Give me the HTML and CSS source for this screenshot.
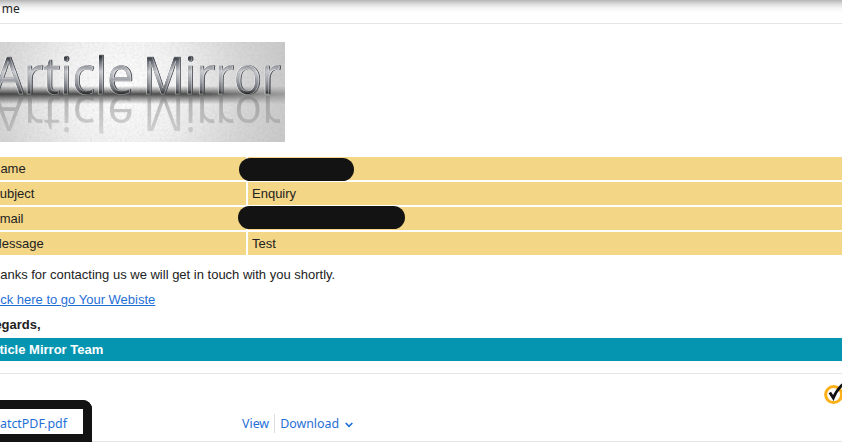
FILE: index.html
```
<!DOCTYPE html>
<html lang="en">
<head>
<meta charset="UTF-8">
<meta name="viewport" content="width=device-width, initial-scale=1.0">
<title>Article Mirror</title>
<link rel="stylesheet" href="styles.css">
</head>
<body>
    <div class="mail">
        <div class="mail-header">to me</div>

        <div class="mail-body">
            <svg class="logo" width="300" height="100" viewBox="-15 0 300 100">
                <defs>
                    <radialGradient id="light" gradientUnits="userSpaceOnUse" cx="122" cy="46" r="165">
                        <stop offset="0" stop-color="#ffffff"/>
                        <stop offset="0.35" stop-color="#f2f2f2"/>
                        <stop offset="0.75" stop-color="#d6d6d6"/>
                        <stop offset="1" stop-color="#cacaca"/>
                    </radialGradient>
                    <linearGradient id="metal" gradientUnits="userSpaceOnUse" x1="0" y1="14" x2="0" y2="53">
                        <stop offset="0" stop-color="#25282e"/>
                        <stop offset="0.15" stop-color="#6c7078"/>
                        <stop offset="0.4" stop-color="#c6c8cc"/>
                        <stop offset="0.65" stop-color="#9a9da3"/>
                        <stop offset="0.85" stop-color="#6a6d72"/>
                        <stop offset="1" stop-color="#181818"/>
                    </linearGradient>
                    <linearGradient id="floor" x1="0" y1="0" x2="0" y2="1">
                        <stop offset="0" stop-color="#222" stop-opacity="0"/>
                        <stop offset="0.45" stop-color="#222" stop-opacity="0.8"/>
                        <stop offset="1" stop-color="#222" stop-opacity="0"/>
                    </linearGradient>
                    <linearGradient id="fade" gradientUnits="userSpaceOnUse" x1="0" y1="12" x2="0" y2="52">
                        <stop offset="0" stop-color="#777" stop-opacity="0.25"/>
                        <stop offset="1" stop-color="#777" stop-opacity="0.5"/>
                    </linearGradient>
                    <linearGradient id="sides" x1="0" y1="0" x2="1" y2="0">
                        <stop offset="0" stop-color="#fff"/>
                        <stop offset="0.7" stop-color="#fff"/>
                        <stop offset="1" stop-color="#555"/>
                    </linearGradient>
                    <mask id="floorMask">
                        <rect x="-15" y="36" width="300" height="30" fill="url(#sides)"/>
                    </mask>
                    <filter id="grain" x="0" y="0" width="100%" height="100%">
                        <feTurbulence type="fractalNoise" baseFrequency="0.4" numOctaves="2" seed="4"/>
                        <feColorMatrix values="0 0 0 0 0.3  0 0 0 0 0.3  0 0 0 0 0.3  0.6 0 0 0 -0.22"/>
                    </filter>
                    <filter id="soft"><feGaussianBlur stdDeviation="0.7"/></filter>
                    <filter id="edge"><feGaussianBlur stdDeviation="0.3"/></filter>
                    <g id="words" class="logo-text">
                        <text x="-6" y="52" textLength="140" lengthAdjust="spacingAndGlyphs">Article</text>
                        <text x="143" y="52" textLength="138" lengthAdjust="spacingAndGlyphs">Mirror</text>
                    </g>
                </defs>
                <rect x="-15" width="300" height="100" fill="url(#light)"/>
                <rect x="-15" width="300" height="100" filter="url(#grain)" opacity="0.45"/>
                <rect x="-15" y="44" width="300" height="18" fill="url(#floor)" mask="url(#floorMask)"/>
                <g transform="matrix(1 0 0 -0.95 0 103)" filter="url(#soft)">
                    <use href="#words" fill="url(#fade)"/>
                </g>
                <g filter="url(#edge)">
                    <use href="#words" x="0.6" y="0.4" fill="#33363c"/>
                    <use href="#words" fill="url(#metal)" stroke="#55585e" stroke-width="0.7"/>
                    <use href="#words" x="-0.3" y="0" fill="url(#metal)"/>
                    <use href="#words" x="-1" y="-0.4" fill="none" stroke="#fff" stroke-width="0.5" opacity="0.6"/>
                </g>
            </svg>

            <table class="enquiry">
                <tr>
                    <td class="label">Name</td>
                    <td><span class="redacted name"></span></td>
                </tr>
                <tr>
                    <td class="label">Subject</td>
                    <td>Enquiry</td>
                </tr>
                <tr>
                    <td class="label">Email</td>
                    <td><span class="redacted email"></span></td>
                </tr>
                <tr>
                    <td class="label">Message</td>
                    <td>Test</td>
                </tr>
            </table>

            <p class="thanks">Thanks for contacting us we will get in touch with you shortly.</p>
            <p class="site"><a href="#">Click here to go Your Webiste</a></p>
            <p class="regards">Regards,</p>
            <div class="team">Article Mirror Team</div>
        </div>

        <div class="attachments">
            <div class="file"><a href="#">atctPDF.pdf</a></div>
            <div class="actions">
                <a href="#">View</a>
                <a href="#" class="download">Download
                    <svg width="8" height="6" viewBox="0 0 8 6"><path d="M0.7 1 L4 4.3 L7.3 1" fill="none" stroke="#1f6fd6" stroke-width="1.7"/></svg>
                </a>
            </div>
            <svg class="scan" width="18" height="24" viewBox="0 0 18 24">
                <circle cx="9.6" cy="12.6" r="8" fill="#fff" stroke="#fdb017" stroke-width="3"/>
                <path d="M5.8 10.5 L9.3 16 Q12 9 18.5 2.5" fill="none" stroke="#111" stroke-width="2.8"/>
            </svg>
        </div>
    </div>
</body>
</html>
```
FILE: styles.css
```
body {
    margin: 0;
    overflow: hidden;
    background-color: #fff;
    font-family: "Liberation Sans", Arial, sans-serif;
    font-size: 13px;
    color: #222;
}
a {
    color: #1f6fd6;
}
.mail {
    height: 442px;
    overflow: hidden;
    background: linear-gradient(#b5b5b5, #dcdcdc 4px, #f5f5f5 8px, #fff 13px) no-repeat;
    background-size: 100% 16px;
}
.mail-header {
    box-sizing: border-box;
    height: 24px;
    margin-left: -15px;
    padding-left: 2px;
    border-bottom: 1px solid #e5e5e5;
    font: 12px/18px "Noto Sans", sans-serif;
}
.mail-body {
    box-sizing: border-box;
    height: 350px;
    margin-left: -15px;
    padding-top: 18px;
    border-bottom: 1px solid #e5e5e5;
}
.logo {
    display: block;
}
.logo-text {
    font-family: "Open Sans", "Noto Sans", sans-serif;
    font-size: 51px;
}
.enquiry {
    width: 100%;
    margin-top: 15px;
    border-spacing: 0;
    table-layout: fixed;
}
.enquiry td {
    position: relative;
    box-sizing: border-box;
    height: 25px;
    padding: 0 4px;
    border-bottom: 2px solid #fff;
    background-color: #f3d686;
}
.enquiry .label {
    width: 263px;
    padding-left: 6px;
    border-right: 2px solid #fff;
}
.redacted {
    position: absolute;
    left: -9px;
    height: 23px;
    border-radius: 12px;
    background-color: #131313;
}
.redacted.name {
    top: 1px;
    width: 115px;
}
.redacted.email {
    top: -1px;
    left: -10px;
    width: 167px;
}
.mail-body p {
    margin: 0;
    line-height: 25px;
}
.mail-body .thanks {
    padding-top: 5px;
}
.regards {
    font-weight: bold;
}
.team {
    margin-top: 1px;
    background-color: #0595b1;
    color: #fff;
    font-weight: bold;
    line-height: 23px;
}
.attachments {
    display: flex;
    align-items: flex-start;
    box-sizing: border-box;
    height: 68px;
    border-bottom: 1px solid #e5e5e5;
    font: 12.4px/20px "Noto Sans", sans-serif;
}
.attachments a {
    text-decoration: none;
}
.file {
    box-sizing: border-box;
    width: 92px;
    height: 42px;
    margin-top: 26px;
    border: solid #131313;
    border-width: 9px 9px 8px 0;
    border-radius: 0 9px 0 0;
    line-height: 30px;
}
.actions {
    display: flex;
    margin: 40px 0 0 150px;
}
.download {
    display: flex;
    align-items: center;
    gap: 6px;
    height: 19px;
    margin-left: 5px;
    padding-left: 5px;
    border-left: 1px solid #ddd;
}
.download svg {
    margin-top: 2px;
}
.scan {
    margin: 8px 0 0 auto;
}
```
